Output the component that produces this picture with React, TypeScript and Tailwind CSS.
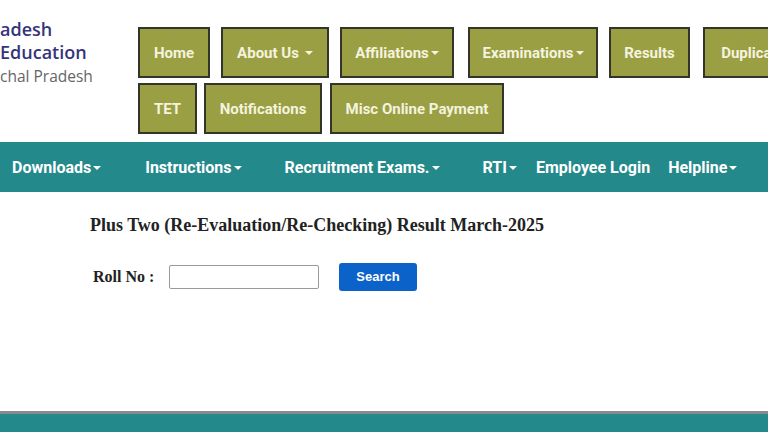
import React from 'react';

const Caret = ({ space = false }: { space?: boolean }) => (
    <span className={`inline-block w-0 h-0 border-x-[4px] border-t-[4px] border-x-transparent border-t-current align-middle ${space ? 'ml-[6px]' : 'ml-[2px]'}`} />
);

const topRow = [
    { label: 'Home', w: 'w-[72px]', caret: false, space: false },
    { label: 'About Us', w: 'w-[108px]', caret: true, space: true },
    { label: 'Affiliations', w: 'w-[114px]', caret: true, space: false },
    { label: 'Examinations', w: 'w-[130px]', caret: true, space: false },
    { label: 'Results', w: 'w-[81px]', caret: false, space: false },
    { label: 'Duplicate', w: 'w-[100px]', caret: false, space: false },
];

const bottomRow = [
    { label: 'TET', w: 'w-[59px]' },
    { label: 'Notifications', w: 'w-[118px]' },
    { label: 'Misc Online Payment', w: 'w-[174px]' },
];

const teal = [
    { label: 'Downloads', caret: true, cls: 'ml-[12px]' },
    { label: 'Instructions', caret: true, cls: 'ml-[44px]' },
    { label: 'Recruitment Exams.', caret: true, cls: 'ml-[43px]' },
    { label: 'RTI', caret: true, cls: 'ml-[43px]' },
    { label: 'Employee Login', caret: false, cls: 'ml-[19px]' },
    { label: 'Helpline', caret: true, cls: 'ml-[18px]' },
];

const NavButton: React.FC<{ label: string; w: string; caret?: boolean; space?: boolean }> = ({ label, w, caret, space }) => (
    <div className={`${w} h-[51px] shrink-0 bg-[#9a9f44] border-2 border-[#34352a] flex items-center justify-center pt-[1px] text-[15px] font-bold text-[#f4f3de] whitespace-nowrap`}>
        {label}
        {caret && <Caret space={space} />}
    </div>
);

export default function App() {
    return (
        <div className="w-[768px] h-[432px] overflow-hidden bg-white flex flex-col" style={{ fontFamily: 'Roboto, "Liberation Sans", sans-serif' }}>
            {/* header */}
            <div className="flex h-[142px] shrink-0">
                <div className="w-[138px] shrink-0 pt-[20px] leading-none" style={{ fontFamily: '"Open Sans", "Noto Sans", sans-serif' }}>
                    <div className="text-[18px] font-semibold text-[#36347a] h-[22px]">adesh</div>
                    <div className="text-[18px] font-semibold text-[#36347a] h-[24px] mt-[1px]">Education</div>
                    <div className="text-[15.5px] font-medium text-[#666] mt-[2px]">chal Pradesh</div>
                </div>
                <div className="flex flex-col gap-[5px] pt-[27px] overflow-hidden">
                    <div className="flex gap-[11px]">
                        {topRow.map((b, i) => (
                            <div key={b.label} className={i === 3 ? 'ml-[3px]' : i === 5 ? 'ml-[2px]' : ''}>
                                <NavButton label={b.label} w={b.w} caret={b.caret} space={b.space} />
                            </div>
                        ))}
                    </div>
                    <div className="flex gap-[7px]">
                        {bottomRow.map((b, i) => (
                            <div key={b.label} className={i === 2 ? 'ml-[1px]' : ''}>
                                <NavButton label={b.label} w={b.w} />
                            </div>
                        ))}
                    </div>
                </div>
            </div>

            {/* teal menu */}
            <div className="h-[50px] shrink-0 bg-[#24898b] flex items-center pt-[1px] text-white text-[16px] font-bold whitespace-nowrap">
                {teal.map((t) => (
                    <span key={t.label} className={`${t.cls} flex items-center`}>
                        {t.label}
                        {t.caret && <Caret />}
                    </span>
                ))}
            </div>

            {/* content */}
            <div className="flex-1 pl-[90px] pt-[22px]" style={{ fontFamily: '"Liberation Serif", "Times New Roman", serif' }}>
                <h1 className="text-[18px] font-bold text-[#222] leading-[22px]">
                    Plus Two (Re-Evaluation/Re-Checking) Result March-2025
                </h1>
                <div className="flex items-center mt-[27px] ml-[3px]">
                    <span className="text-[16px] font-bold text-[#222] w-[76px]">Roll No :</span>
                    <input className="w-[150px] h-[24px] border border-[#9a9a9a] rounded-[2px] bg-white" />
                    <button
                        className="ml-[20px] w-[78px] h-[28px] bg-[#0b62c9] rounded-[3px] text-white text-[13px] font-bold"
                        style={{ fontFamily: '"Liberation Sans", Arial, sans-serif' }}
                    >
                        Search
                    </button>
                </div>
            </div>

            {/* footer */}
            <div className="h-[3px] shrink-0 bg-[#8a8a8a]" />
            <div className="h-[18px] shrink-0 bg-[#24898b]" />
        </div>
    );
}
